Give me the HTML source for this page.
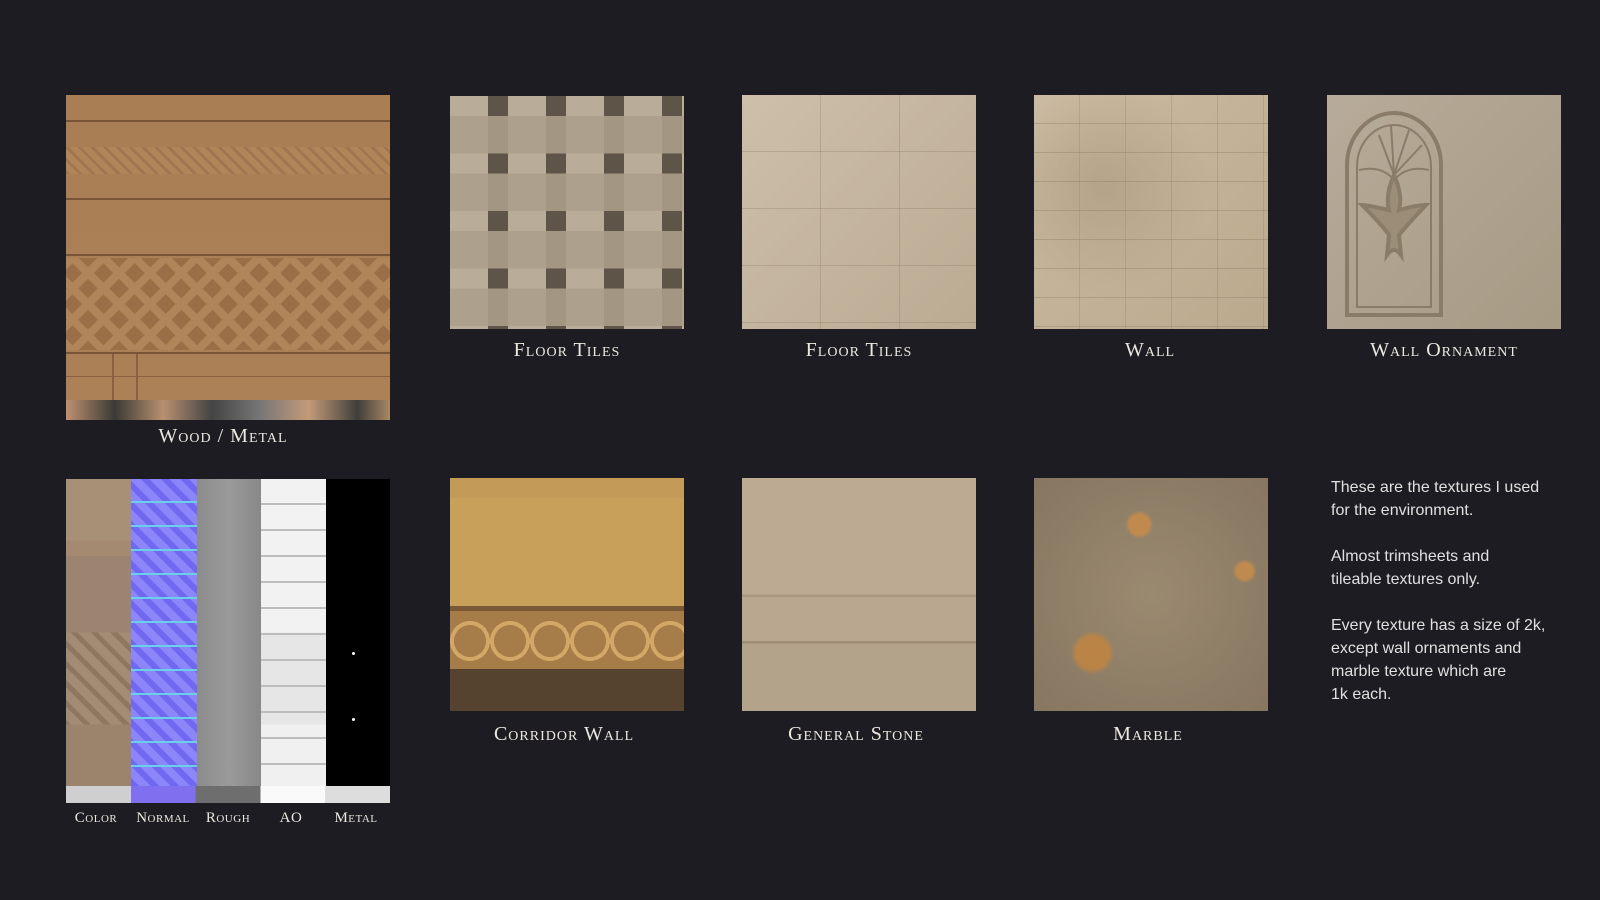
<!DOCTYPE html><html><head><style>
body{margin:0;width:1600px;height:900px;background:#1c1c22;position:relative;overflow:hidden;font-family:"Liberation Serif",serif}
.t{position:absolute}
.l{position:absolute;color:#ece8e0;font-variant:small-caps;font-size:20px;letter-spacing:1px;text-align:center;transform:translateX(-50%);white-space:nowrap;line-height:1}
.s{font-size:15px;letter-spacing:.5px}
.txt{position:absolute;left:1331px;top:476px;color:#e0e0e0;font-family:"Liberation Sans",sans-serif;font-size:16px;line-height:23px}
</style></head><body>
<!-- wood -->
<div class="t" style="left:66px;top:95px;width:324px;height:325px;background:linear-gradient(#aa7e54,#ad8157)"></div>
<div class="t" style="left:66px;top:120px;width:324px;height:2px;background:#7a5535"></div>
<div class="t" style="left:66px;top:147px;width:324px;height:27px;background:repeating-linear-gradient(45deg,#a07650 0 3px,#b08659 3px 9px),#aa7f55"></div>
<div class="t" style="left:66px;top:198px;width:324px;height:2px;background:#7a5535"></div>
<div class="t" style="left:66px;top:254px;width:324px;height:2px;background:#7a5535"></div>
<div class="t" style="left:66px;top:258px;width:324px;height:92px;background:repeating-linear-gradient(45deg,#b08559 0 8px,#9a6f48 8px 22px),repeating-linear-gradient(-45deg,#b08559 0 8px,transparent 8px 22px);background-blend-mode:lighten"></div>
<div class="t" style="left:66px;top:352px;width:324px;height:2px;background:#7a5535"></div>
<div class="t" style="left:66px;top:376px;width:324px;height:1px;background:#8a6040"></div>
<div class="t" style="left:112px;top:354px;width:2px;height:46px;background:#8a6040"></div>
<div class="t" style="left:136px;top:354px;width:2px;height:46px;background:#8a6040"></div>
<div class="t" style="left:66px;top:400px;width:324px;height:20px;background:linear-gradient(90deg,#c09070,#3a3a35 15%,#b89070 30%,#444 45%,#777 60%,#c49a78 75%,#3f3f3a 90%,#aa8866)"></div>
<div class="l" style="left:223px;top:426px">Wood / Metal</div>
<!-- floor tiles 1 -->
<svg class="t" style="left:450px;top:96px" width="234" height="233"><defs><pattern id="p" width="58" height="57.5" patternUnits="userSpaceOnUse" x="0" y="0"><rect width="58" height="58" fill="#ada08c"/><rect x="0" y="0" width="38" height="20" fill="#b9ad9a"/><rect x="38" y="20" width="20" height="38" fill="#a39683"/><rect x="38" y="0" width="20" height="20" fill="#5f5448"/></pattern></defs><rect width="234" height="233" fill="url(#p)"/></svg>
<div class="l" style="left:567px;top:340px">Floor Tiles</div>
<!-- floor tiles 2 -->
<div class="t" style="left:742px;top:95px;width:234px;height:234px;background:
repeating-linear-gradient(90deg,transparent 0 78px,rgba(140,125,105,.35) 78px 79px),
repeating-linear-gradient(transparent 0 56px,rgba(140,125,105,.35) 56px 57px),
linear-gradient(135deg,#cdbfa9,#bcab93)"></div>
<div class="l" style="left:859px;top:340px">Floor Tiles</div>
<!-- wall -->
<div class="t" style="left:1034px;top:95px;width:234px;height:234px;background:
repeating-linear-gradient(transparent 0 28px,rgba(140,125,105,.4) 28px 29px),
repeating-linear-gradient(90deg,transparent 0 45px,rgba(140,125,105,.3) 45px 46px),
radial-gradient(circle at 30% 40%,#b5a388,transparent 50%),
linear-gradient(135deg,#cbbba2,#bba98d)"></div>
<div class="l" style="left:1150px;top:340px">Wall</div>
<!-- wall ornament -->
<div class="t" style="left:1327px;top:95px;width:234px;height:234px;background:linear-gradient(135deg,#b7ab99,#a79a85)">
<svg width="234" height="234" style="position:absolute;left:0;top:0"><g fill="none" stroke="#8a7c68" stroke-width="4">
<path d="M20 220 V70 A47 52 0 0 1 114 70 V220 Z"/><path d="M30 212 V72 A37 42 0 0 1 104 72 V212 Z" stroke-width="2"/>
<path d="M67 80 L52 40 M67 80 L64 30 M67 80 L82 35 M67 80 L95 50 M32 75 Q55 70 67 85 Q80 70 102 75" stroke-width="2"/>
<path d="M67 80 Q58 100 62 115 Q40 110 35 110 Q55 130 62 140 L60 160 Q67 150 74 160 L72 140 Q80 130 99 110 Q90 110 72 115 Q76 100 67 80 Z" fill="#9b8d78"/></g></svg></div>
<div class="l" style="left:1444px;top:340px">Wall Ornament</div>
<!-- maps -->
<div class="t" style="left:66px;top:479px;width:65px;height:307px;background:linear-gradient(#a89077 0 20%,#a48a70 20% 25%,#9b8470 25% 50%,transparent 50% 80%,#9c846c 80%),repeating-linear-gradient(45deg,#8e7660 0 5px,#a48c74 5px 14px)"></div>
<div class="t" style="left:131px;top:479px;width:66px;height:307px;background:repeating-linear-gradient(transparent 0 22px,#6ad0e8 22px 24px),repeating-linear-gradient(45deg,#7068f0 0 6px,#8c86fa 6px 14px)"></div>
<div class="t" style="left:197px;top:479px;width:64px;height:307px;background:linear-gradient(90deg,#8c8c8c,#9a9a9a,#888)"></div>
<div class="t" style="left:261px;top:479px;width:65px;height:307px;background:repeating-linear-gradient(transparent 0 24px,#bdbdbd 24px 26px),linear-gradient(#f2f2f2 0 50%,#e6e6e6 50% 80%,#f0f0f0 80%)"></div>
<div class="t" style="left:326px;top:479px;width:64px;height:307px;background:#000"></div>
<div class="t" style="left:352px;top:652px;width:3px;height:3px;background:#fff;border-radius:50%"></div>
<div class="t" style="left:352px;top:718px;width:3px;height:3px;background:#fff;border-radius:50%"></div>
<div class="t" style="left:66px;top:786px;width:324px;height:17px;background:linear-gradient(90deg,#cfcfcf 0 20%,#8070f0 20% 40%,#6e6e6e 40% 60%,#fafafa 60% 80%,#ddd 80%)"></div>
<div class="l s" style="left:96px;top:811px">Color</div>
<div class="l s" style="left:163px;top:811px">Normal</div>
<div class="l s" style="left:228px;top:811px">Rough</div>
<div class="l s" style="left:291px;top:811px">AO</div>
<div class="l s" style="left:356px;top:811px">Metal</div>
<!-- corridor -->
<div class="t" style="left:450px;top:478px;width:234px;height:233px;background:linear-gradient(#c49a58 0 20px,#c9a05a 20px 55%,#7a5a36 55% 57%,#a67c48 57% 82%,#55432f 82%)"></div>
<div class="t" style="left:450px;top:612px;width:234px;height:58px;background:repeating-radial-gradient(circle at 20px 29px,transparent 0 16px,#d3a866 16px 20px,transparent 20px 24px) 0 0/40px 58px"></div>
<div class="l" style="left:564px;top:724px">Corridor Wall</div>
<!-- general stone -->
<div class="t" style="left:742px;top:478px;width:234px;height:233px;background:linear-gradient(#bcab92 0 50%,#a89880 50% 51%,#b9a88f 51% 70%,#9e8e77 70% 71%,#b3a38b 71%)"></div>
<div class="l" style="left:856px;top:724px">General Stone</div>
<!-- marble -->
<div class="t" style="left:1034px;top:478px;width:234px;height:233px;background:radial-gradient(circle at 45% 20%,#c08a4e 0 10px,transparent 14px),radial-gradient(circle at 25% 75%,#b98446 0 16px,transparent 22px),radial-gradient(circle at 90% 40%,#c08a4e 0 8px,transparent 12px),radial-gradient(ellipse at 50% 50%,#9a8a70,#877660)"></div>
<div class="l" style="left:1148px;top:724px">Marble</div>
<div class="txt">These are the textures I used<br>for the environment.<br><br>Almost trimsheets and<br>tileable textures only.<br><br>Every texture has a size of 2k,<br>except wall ornaments and<br>marble texture which are<br>1k each.</div>
</body></html>
